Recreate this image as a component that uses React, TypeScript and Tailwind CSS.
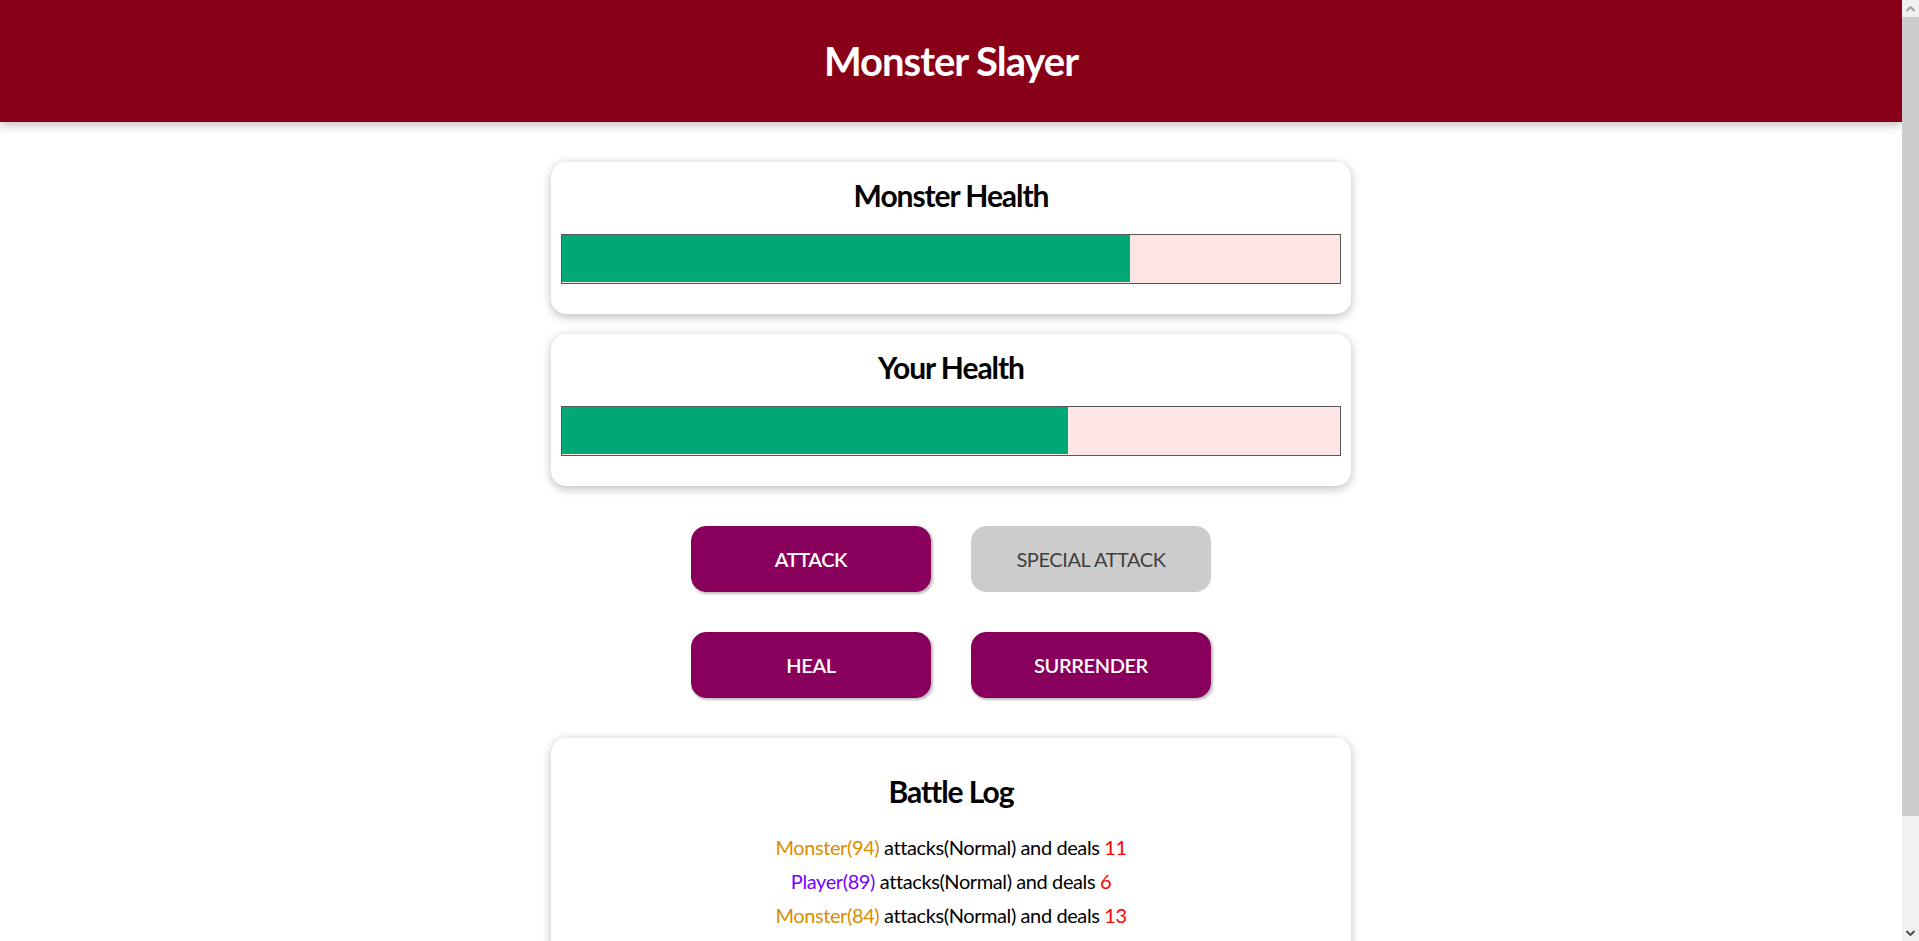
import React from "react";

type Log = { who: "Monster" | "Player"; val: number; dmg: number };

const logs: Log[] = [
  { who: "Monster", val: 94, dmg: 11 },
  { who: "Player", val: 89, dmg: 6 },
  { who: "Monster", val: 84, dmg: 13 },
  { who: "Player", val: 79, dmg: 12 },
  { who: "Monster", val: 73, dmg: 11 },
  { who: "Player", val: 68, dmg: 9 },
];

function HealthCard({ title, value }: { title: string; value: number }) {
  return (
    <section className="mx-auto my-[20px] w-[800px] rounded-[15px] bg-white p-[10px] text-center shadow-[0_2.5px_10px_rgba(0,0,0,0.26)]">
      <h2 className="mx-[5px] mt-[5px] text-[30px] font-bold leading-[37px] tracking-[-0.035em] text-black">{title}</h2>
      <div className="my-[20px] h-[50px] w-full border border-[#575757] bg-[#fde5e5]">
        <div className="h-[47px] bg-[#00a876]" style={{ width: `${value}%` }} />
      </div>
    </section>
  );
}

function Btn({ label, disabled }: { label: string; disabled?: boolean }) {
  return (
    <button
      disabled={disabled}
      className={
        disabled
          ? "m-[20px] w-[240px] rounded-[15px] border border-[#ccc] bg-[#ccc] px-[20px] py-[20px] text-[20px] leading-[24px] tracking-[-0.02em] text-[#3f3f3f]"
          : "m-[20px] w-[240px] rounded-[15px] border border-[#88005b] bg-[#88005b] px-[20px] py-[20px] text-[20px] font-semibold leading-[24px] tracking-[-0.02em] text-white shadow-[1.25px_1.25px_2.5px_rgba(0,0,0,0.26)]"
      }
    >
      {label}
    </button>
  );
}

function Scrollbar() {
  return (
    <div className="flex h-[941px] w-[17px] shrink-0 flex-col bg-[#f0f0f0]">
      <div className="flex h-[17px] items-center justify-center">
        <svg width="9" height="6" viewBox="0 0 9 6">
          <path d="M0.5 5 L4.5 1 L8.5 5" fill="none" stroke="#a3a3a3" strokeWidth="2" />
        </svg>
      </div>
      <div className="mx-[0px] h-[799px] bg-[#cdcdcd]" />
      <div className="flex-1" />
      <div className="flex h-[17px] items-center justify-center">
        <svg width="9" height="6" viewBox="0 0 9 6">
          <path d="M0.5 1 L4.5 5 L8.5 1" fill="none" stroke="#505050" strokeWidth="2" />
        </svg>
      </div>
    </div>
  );
}

export default function App() {
  return (
    <div className="flex h-[941px] w-full overflow-hidden bg-white">
      <div className="min-w-0 flex-1 text-[20px] text-black" style={{ fontFamily: "Lato, 'Open Sans', sans-serif" }}>
        <header className="bg-[#880017] p-[10px] text-center text-white shadow-[0_2.5px_10px_rgba(0,0,0,0.26)]">
          <h1 className="my-[27px] text-[40px] font-bold leading-[48px] tracking-[-0.025em]">Monster Slayer</h1>
        </header>
        <div className="h-[20px]" />
        <HealthCard title="Monster Health" value={73} />
        <HealthCard title="Your Health" value={65} />
        <section className="mx-auto flex w-[800px] flex-wrap justify-center">
          <Btn label="ATTACK" />
          <Btn label="SPECIAL ATTACK" disabled />
          <Btn label="HEAL" />
          <Btn label="SURRENDER" />
        </section>
        <section className="mx-auto my-[20px] w-[800px] rounded-[15px] bg-white p-[10px] text-center shadow-[0_2.5px_10px_rgba(0,0,0,0.26)]">
          <h2 className="my-[25px] text-[30px] font-bold leading-[37px] tracking-[-0.035em]">Battle Log</h2>
          <ul className="flex flex-col gap-[10px] pb-[10px]">
            {logs.map((l, i) => (
              <li key={i} className="leading-[24px] tracking-[-0.02em]">
                <span className={l.who === "Monster" ? "text-[#da8d00]" : "text-[#7700ff]"}>
                  {l.who}({l.val})
                </span>{" "}
                attacks(Normal) and deals <span className="text-[red]">{l.dmg}</span>
              </li>
            ))}
          </ul>
        </section>
      </div>
      <Scrollbar />
    </div>
  );
}
